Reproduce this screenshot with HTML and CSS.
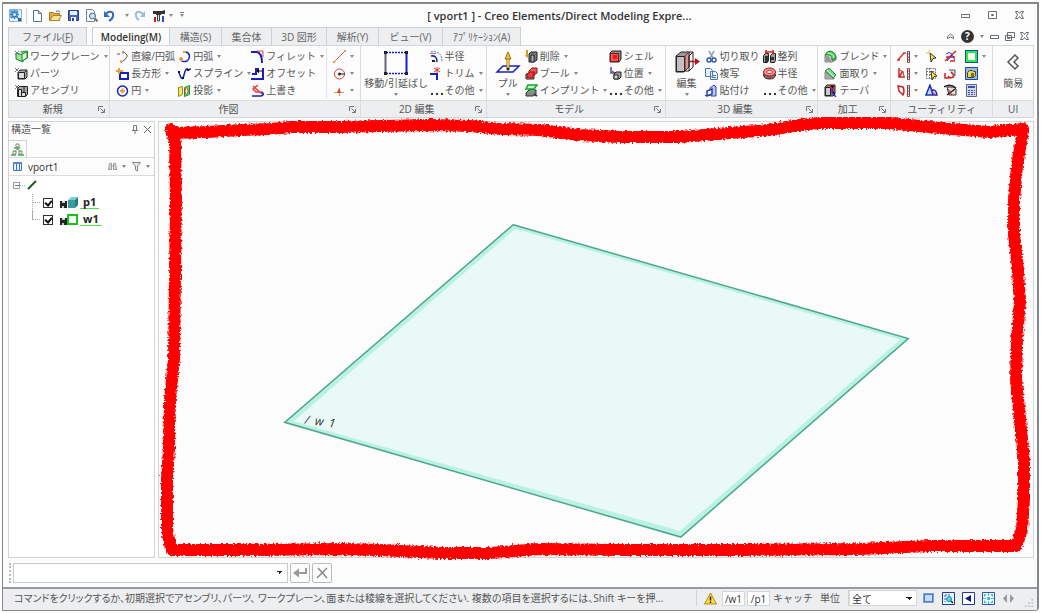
FILE: index.html
```html
<!DOCTYPE html>
<html lang="ja">
<head>
<meta charset="utf-8">
<title>[ vport1 ] - Creo Elements/Direct Modeling Express</title>
<link rel="stylesheet" href="styles.css">
</head>
<body>
<div class="window">
  <header class="titlebar">
    <div class="quick">
      <svg class="ic" viewBox="0 0 13 13"><path fill="#e6f3fb" stroke="#8db4d0" d="M.5.5h12v12H.5z"/><path fill="#8dc4e8" d="M1 1h8v8H1z"/><path stroke="#2f80bd" stroke-width="1.500" d="M5.500 1v9M1 5.500h9M2 2l7 7M9 2L2 9"/><circle cx="5.500" cy="5.500" r="1.500" fill="#d8f0ff"/><path fill="#276594" d="M9 9h3v3H9z"/></svg>
      <i class="vsep"></i>
      <button class="q" aria-label="新規"><svg class="ic" viewBox="0 0 13 13"><path fill="#fff" stroke="#5a7392" d="M2.500 1.500h5l3 3v8h-8z"/><path fill="#c9d9ea" stroke="#5a7392" d="M7.500 1.500v3h3"/></svg></button>
      <button class="q" aria-label="開く"><svg class="ic" viewBox="0 0 13 13"><path fill="#e8a93b" stroke="#a87320" d="M.5 11.500v-8h4l1 1h5v7z"/><path fill="#ffe49a" stroke="#b88328" d="M1 11.500l3-5h8.500l-3 5z"/><path fill="none" stroke="#3a70ad" d="M7 2.500q3-2 4 1"/></svg></button>
      <button class="q" aria-label="保存"><svg class="ic" viewBox="0 0 13 13"><path fill="#4666bd" stroke="#263f8e" d="M1.500 1.500h10v10h-10z"/><path fill="#e8f0ff" d="M3 2h7v4H3z"/><path fill="#fff" d="M4 8h5v4H4z"/><path fill="#263f8e" d="M5 9h2v3H5z"/></svg></button>
      <button class="q" aria-label="プレビュー"><svg class="ic" viewBox="0 0 13 13"><path fill="#fff" stroke="#71839a" d="M1.500.5h6l2 2v10h-8z"/><circle cx="7.500" cy="7" r="3" fill="#c8e2f8" stroke="#48688c"/><path stroke="#8b6b46" stroke-width="2" d="M10 9.500l2.500 3"/></svg></button>
      <button class="q" aria-label="元に戻す"><svg class="ic" viewBox="0 0 13 13"><path fill="none" stroke="#3769bd" stroke-width="2" d="M3 4.500C7 1 11 3 10 7q-.5 3-4 5"/><path fill="#3769bd" d="M1 2v6h6z"/></svg></button>
      <i class="caret"></i>
      <button class="q" aria-label="やり直し"><svg class="ic" viewBox="0 0 13 13"><path fill="none" stroke="#9bbcdd" stroke-width="2" d="M10 5C6 1 2 3 3 7q.5 3 3 4"/><path fill="#9bbcdd" d="M12 2v6H7z"/></svg></button>
      <button class="q wide" aria-label="ツール"><svg class="ic" viewBox="0 0 13 13"><path fill="#333" d="M0 2h9l3-1v4H8v1H3V5H0z"/><path fill="#ddd" stroke="#444" d="M4.500 6v6h2V6"/><path stroke="#c42020" stroke-width="2" d="M2 8v5"/><path stroke="#2954b6" stroke-width="2" d="M10 7v6"/></svg><i class="caret"></i></button>
      <i class="caret bar"></i>
    </div>
    <h1>[ vport1 ] - Creo Elements/Direct Modeling Expre...</h1>
    <div class="winbtns">
      <button aria-label="最小化"><svg class="ic" viewBox="0 0 13 13"><path fill="#fff" stroke="#666c75" d="M2.500 5.500h8v3h-8z"/></svg></button>
      <button aria-label="最大化"><svg class="ic" viewBox="0 0 13 13"><path fill="#fff" stroke="#666c75" d="M2.500 2.500h8v7h-8zM5.500 5.500h2v1h-2z"/></svg></button>
      <button aria-label="閉じる"><svg class="ic" viewBox="0 0 13 13"><path fill="#fff" stroke="#666c75" d="M2.500 2.500h2.500l1.500 2 1.500-2h2.500L8.500 6l2 3.500H8l-1.500-2-1.500 2H2.500l2-3.500z"/></svg></button>
    </div>
  </header>

  <nav class="tabs">
    <button class="tab file">ファイル(<u>F</u>)</button>
    <button class="tab active">Modeling(M)</button>
    <button class="tab t52">構造(S)</button>
    <button class="tab t50">集合体</button>
    <button class="tab t55">3D 図形</button>
    <button class="tab t52">解析(Y)</button>
    <button class="tab t64">ビュー(V)</button>
    <button class="tab t78">ｱﾌﾟﾘｹｰｼｮﾝ(A)</button>
    <div class="docbtns">
      <button aria-label="リボンを隠す"><svg class="ic" viewBox="0 0 13 13"><path fill="#fff" stroke="#666c75" d="M3.500 6.500L6.500 4l3 2.500v2L6.500 7l-3 1.500z"/></svg></button>
      <button aria-label="ヘルプ" class="help">?</button>
      <i class="caret"></i>
      <button aria-label="最小化"><svg class="ic" viewBox="0 0 13 13"><path fill="#fff" stroke="#666c75" d="M2.500 5.500h8v3h-8z"/></svg></button>
      <button aria-label="元のサイズ"><svg class="ic" viewBox="0 0 13 13"><path fill="#fff" stroke="#666c75" d="M4.500 2.500h7v5h-7zM2.500 5.500h6v5h-6zM4.500 7.500h2v1h-2z"/></svg></button>
      <button aria-label="閉じる"><svg class="ic" viewBox="0 0 13 13"><path fill="#fff" stroke="#666c75" d="M2.500 2.500h2.500l1.500 2 1.500-2h2.500L8.500 6l2 3.500H8l-1.500-2-1.500 2H2.500l2-3.500z"/></svg></button>
    </div>
  </nav>

  <section class="ribbon">
    <div class="group g-new">
      <div class="tools">
        <button class="tool"><svg class="ic" viewBox="0 0 13 13"><path fill="#9be49b" stroke="#168a2b" d="M1 3l7 2v7L1 9zM5.500 2l7-1v7l-4 2"/><path fill="#dfffd8" stroke="#168a2b" d="M7 4l5-2v6L7 11z"/><path stroke="#777" d="M0 1l4 4M4 1L0 5"/></svg>ワークプレーン<i class="caret"></i></button>
        <button class="tool"><svg class="ic" viewBox="0 0 13 13"><path fill="#aaa" stroke="#222" d="M3 5l2-2h7v7l-2 2H3z"/><path fill="#ddd" stroke="#222" d="M3.500 5.500h6v6h-6zM9.500 5.500l2-2"/><path stroke="#777" d="M0 1l4 4M4 1L0 5"/></svg>パーツ</button>
        <button class="tool"><svg class="ic" viewBox="0 0 13 13"><path fill="#aaa" stroke="#222" d="M2.500 4.500l2-2h8v8l-2 2h-8z"/><path fill="#ddd" stroke="#222" d="M3.500 5.500h3v7h-3zM6.500 8.500h4v4h-4zM9 3v5"/><path stroke="#777" d="M0 1l4 4M4 1L0 5"/></svg>アセンブリ</button>
      </div>
      <h2 class="has-launch">新規<svg class="launch" viewBox="0 0 7 7"><path fill="none" stroke="#777" d="M.5 5V.5H5M2.500 2.500L6 6M6.500 3v3.500H3"/></svg></h2>
    </div>

    <div class="group g-draw">
      <div class="tools">
        <button class="tool"><svg class="ic" viewBox="0 0 13 13"><path fill="none" stroke="#3150c8" d="M1 4h3M4 12q6-1 7-7L7 1"/><path stroke="#e3a13a" stroke-width="2" d="M6 2l2 1M4 11l2 1M10 6h2"/></svg>直線/円弧</button>
        <button class="tool"><svg class="ic" viewBox="0 0 13 13"><path fill="none" stroke="#1820bd" stroke-width="2" d="M4 6h8v6H4z"/><path stroke="#e3a13a" stroke-width="2" d="M0 4h7M3 1v6"/></svg>長方形<i class="caret"></i></button>
        <button class="tool"><svg class="ic" viewBox="0 0 13 13"><circle cx="6.500" cy="7" r="5" fill="none" stroke="#1820bd" stroke-width="1.500"/><path stroke="#e3a13a" stroke-width="2" d="M4 7h5M6.500 4.500v5"/></svg>円<i class="caret"></i></button>
        <button class="tool"><svg class="ic" viewBox="0 0 13 13"><path fill="none" stroke="#1820bd" stroke-width="1.500" d="M6 2c6-1 7 6 3 9-3 1-5 1-6-1"/><path stroke="#e3a13a" stroke-width="2" d="M5 2h3M1 9h4M3 7v4"/></svg>円弧<i class="caret"></i></button>
        <button class="tool"><svg class="ic" viewBox="0 0 13 13"><path fill="none" stroke="#1820bd" stroke-width="1.500" d="M1 5c2 8 4 8 5 3s3-8 4-5l3-1"/><path stroke="#111" stroke-width="2" d="M0 5h2M4 11h2M9 3h2"/></svg>スプライン<i class="caret"></i></button>
        <button class="tool"><svg class="ic" viewBox="0 0 13 13"><path fill="#ffe65a" stroke="#8b8c25" d="M.5 3.500l4-1v8l-4 2z"/><path fill="#69df69" stroke="#159532" d="M6.500 3.500l5-2v9l-5 2z"/><ellipse cx="8.500" cy="7" rx="1.500" ry="3" fill="#fff" stroke="#d6322c"/></svg>投影<i class="caret"></i></button>
        <button class="tool"><svg class="ic" viewBox="0 0 13 13"><path fill="none" stroke="#1820bd" stroke-width="2" d="M0 2h6q5 1 5 11"/><path fill="none" stroke="#e24040" d="M6 1h6v6"/></svg>フィレット<i class="caret"></i></button>
        <button class="tool"><svg class="ic" viewBox="0 0 13 13"><path fill="none" stroke="#1820bd" stroke-width="2" d="M0 12h12V1M1 7h4V2h3"/><path stroke="#111" d="M6 4h6M8 2L6 4l2 2"/></svg>オフセット</button>
        <button class="tool"><svg class="ic" viewBox="0 0 13 13"><path fill="none" stroke="#e24040" stroke-width="1.500" d="M7 1L2 5l3 3h6M2 2l9 8"/><path fill="none" stroke="#1820bd" stroke-width="1.500" d="M1 12h9q4-1 1-4"/></svg>上書き</button>
        <button class="tool sep" aria-label="線"><svg class="ic" viewBox="0 0 13 13"><path stroke="#cf5f59" d="M1 12L12 1"/><path stroke="#e0a149" stroke-width="2" d="M0 12h2M11 1h2"/></svg><i class="caret"></i></button>
        <button class="tool sep" aria-label="補助円"><svg class="ic" viewBox="0 0 13 13"><circle cx="6.500" cy="7" r="5" fill="none" stroke="#cf3f3f"/><circle cx="6.500" cy="7" r="1.500" fill="#222"/><path stroke="#222" d="M6 7h6"/></svg><i class="caret"></i></button>
        <button class="tool sep" aria-label="点"><svg class="ic" viewBox="0 0 13 13"><path stroke="#e0a149" d="M1 8.500h10M6.500 4v8"/><path fill="#cf3f3f" d="M4 9l2-5 2 5z"/></svg><i class="caret"></i></button>
      </div>
      <h2 class="has-launch">作図<svg class="launch" viewBox="0 0 7 7"><path fill="none" stroke="#777" d="M.5 5V.5H5M2.500 2.500L6 6M6.500 3v3.500H3"/></svg></h2>
    </div>

    <div class="group g-2d">
      <div class="tools">
        <button class="big"><svg class="bi" viewBox="0 0 26 26"><path stroke="#667" stroke-width="2" d="M2.500 2v22"/><path stroke="#1820bd" stroke-width="2" d="M23.500 2v22"/><path stroke="#1820bd" stroke-width="1.500" stroke-dasharray="2 1" d="M3 2.500h20M3 23.500h20"/><path fill="#222" d="M1 1h3v3H1zM1 22h3v3H1zM22 1h3v3h-3zM22 22h3v3h-3z"/></svg>移動/引延ばし<i class="caret"></i></button>
        <button class="tool"><svg class="ic" viewBox="0 0 13 13"><path fill="none" stroke="#4c6fd0" stroke-dasharray="2 1" d="M1 2q11-2 11 10"/><path fill="none" stroke="#1820bd" stroke-width="1.500" d="M1 6q6-1 6 6"/><path stroke="#d66" d="M0 3.500h6"/><path fill="#222" d="M2 10h3v2H2z"/></svg>半径</button>
        <button class="tool"><svg class="ic" viewBox="0 0 13 13"><path fill="none" stroke="#1820bd" stroke-width="2" d="M0 7h7v6"/><path stroke="#e23030" d="M7 0v6M4 1l6 4M10 1L4 5"/></svg>トリム<i class="caret"></i></button>
        <button class="tool"><svg class="ic" viewBox="0 0 13 13"><path fill="#333" d="M1 9h2v2H1zM6 9h2v2H6zM11 9h2v2h-2z"/></svg>その他<i class="caret"></i></button>
      </div>
      <h2 class="has-launch">2D 編集<svg class="launch" viewBox="0 0 7 7"><path fill="none" stroke="#777" d="M.5 5V.5H5M2.500 2.500L6 6M6.500 3v3.500H3"/></svg></h2>
    </div>

    <div class="group g-model">
      <div class="tools">
        <button class="big"><svg class="bi" viewBox="0 0 26 26"><path fill="#fff" stroke="#1820bd" stroke-width="1.500" d="M2 22l6-6h16l-6 6z"/><path stroke="#7c6325" stroke-width="3" d="M13 19V7"/><path stroke="#f3c032" stroke-width="2" d="M13 19V7"/><path fill="#f3c032" stroke="#9c7417" d="M10 9l3-7 3 7z"/><circle cx="13" cy="19" r="1.500" fill="#222"/></svg>プル<i class="caret"></i></button>
        <button class="tool"><svg class="ic" viewBox="0 0 13 13"><path fill="#777" stroke="#222" d="M4 4l2-2h6v8l-3 2H4z"/><path fill="#a8b7d9" stroke="#222" d="M6 5h3v7H6z"/><path stroke="#d69c21" stroke-width="2" d="M2 0v6"/><path fill="#d69c21" d="M0 5h4L2 8z"/></svg>削除<i class="caret"></i></button>
        <button class="tool"><svg class="ic" viewBox="0 0 13 13"><path fill="#f25b5b" stroke="#851515" d="M4 4l3-3h5v5L9 8H4z"/><path fill="#ddd" stroke="#222" d="M1 7h8v5H1z"/><path fill="#f33" stroke="#851515" d="M2 7l3-2h5L8 8v3H2z"/></svg>ブール<i class="caret"></i></button>
        <button class="tool"><svg class="ic" viewBox="0 0 13 13"><path fill="#c4f4c4" stroke="#13a52e" stroke-width="1.500" d="M3 1h9l-3 4H1zM3 7h5"/><path fill="#888" stroke="#333" d="M1 9l3-3h7v4l-3 2H1z"/><path fill="#48c260" d="M3 8l3-2h4L7 8z"/><path stroke="#333" stroke-width="2" d="M9 10l3 2"/></svg>インプリント<i class="caret"></i></button>
        <button class="tool"><svg class="ic" viewBox="0 0 13 13"><path fill="#888" stroke="#222" d="M1 3l2-2h9v8l-2 3H1z"/><path fill="#e65a5a" stroke="#801616" d="M1.500 3.500h8v8h-8z"/><path fill="#f2140b" d="M4 5h4v4H4z"/></svg>シェル</button>
        <button class="tool"><svg class="ic" viewBox="0 0 13 13"><path fill="none" stroke="#3253d5" stroke-width="1.500" d="M2 0v6h5"/><path stroke="#e22" stroke-width="1.500" d="M3 4l5 4"/><path fill="#999" stroke="#222" d="M5 7l2-2h5v5l-2 2H5z"/><path fill="#ddd" stroke="#222" d="M5 8h4v4H5z"/></svg>位置<i class="caret"></i></button>
        <button class="tool"><svg class="ic" viewBox="0 0 13 13"><path fill="#333" d="M1 9h2v2H1zM6 9h2v2H6zM11 9h2v2h-2z"/></svg>その他<i class="caret"></i></button>
      </div>
      <h2 class="has-launch">モデル<svg class="launch" viewBox="0 0 7 7"><path fill="none" stroke="#777" d="M.5 5V.5H5M2.500 2.500L6 6M6.500 3v3.500H3"/></svg></h2>
    </div>

    <div class="group g-3d">
      <div class="tools">
        <button class="big"><svg class="bi" viewBox="0 0 26 26"><path fill="#999" stroke="#222" d="M2 6l5-4h8v15l-5 5H2z"/><path fill="#c4c0c0" stroke="#222" d="M2.500 6.500h8v15h-8z"/><path fill="#c99" stroke="#722" d="M11 6l4-4v15l-4 4z"/><path fill="none" stroke="#222" d="M15 2h4v15l-4 4h-4M15 6l4-4M15 6v15"/><path stroke="#b11" stroke-width="1.500" d="M16 11.500h6"/><path fill="#b11" d="M21 8l5 3.500-5 3.500z"/></svg>編集<i class="caret"></i></button>
        <button class="tool"><svg class="ic" viewBox="0 0 13 13"><path stroke="#8796aa" stroke-width="1.500" d="M4 1l4 7M9 1L5 8"/><g fill="none" stroke="#2c5bae" stroke-width="1.500"><circle cx="4" cy="10" r="2"/><circle cx="9" cy="10" r="2"/></g></svg>切り取り</button>
        <button class="tool"><svg class="ic" viewBox="0 0 13 13"><path fill="#e8f2fd" stroke="#4d78ad" d="M.5 1.500h5l2 2v6h-7zM5.500 4.500h5l2 2v6h-7z"/><path stroke="#4d78ad" d="M7 8.500h4M7 10.500h4"/></svg>複写</button>
        <button class="tool"><svg class="ic" viewBox="0 0 13 13"><path fill="#b6c9f4" stroke="#2c3fae" d="M5 4l4-3 2 2v9H6z"/><path fill="#fff" stroke="#2c3fae" stroke-width="1.500" d="M2 7l5-2v5l-5 2z"/><path stroke="#2c3fae" d="M0 11.500h5"/></svg>貼付け</button>
        <button class="tool"><svg class="ic" viewBox="0 0 13 13"><path fill="#999" stroke="#222" d="M.5 5.500l2-2h3v7l-1 2h-4zM7.500 5.500l2-2h3v7l-1 2h-4z"/><path fill="#333" d="M2 6h3v6H2zM8 7h3v3H8z"/><path stroke="#d22" stroke-width="1.500" d="M2 2h9M3 0v4M10 0v4"/></svg>整列</button>
        <button class="tool"><svg class="ic" viewBox="0 0 13 13"><ellipse cx="6.500" cy="8" rx="6" ry="4" fill="#777" stroke="#222"/><ellipse cx="6.500" cy="5" rx="6" ry="4" fill="#ef9999" stroke="#a11"/><ellipse cx="6.500" cy="5" rx="3" ry="1.500" fill="#fff" stroke="#d22"/><path stroke="#d22" d="M2 8l8 4"/></svg>半径</button>
        <button class="tool"><svg class="ic" viewBox="0 0 13 13"><path fill="#333" d="M1 9h2v2H1zM6 9h2v2H6zM11 9h2v2h-2z"/></svg>その他<i class="caret"></i></button>
      </div>
      <h2 class="has-launch">3D 編集<svg class="launch" viewBox="0 0 7 7"><path fill="none" stroke="#777" d="M.5 5V.5H5M2.500 2.500L6 6M6.500 3v3.500H3"/></svg></h2>
    </div>

    <div class="group g-mach">
      <div class="tools">
        <button class="tool"><svg class="ic" viewBox="0 0 13 13"><path fill="#999" stroke="#888" d="M1 5v7h7V8l4-1v3l-4 2"/><path fill="#55cf67" stroke="#16822c" d="M1 5q2-4 5-4 6 1 6 7l-4 2q0-5-4-5z"/><path fill="none" stroke="#c7ffd0" d="M4 3q5 0 6 5"/><path fill="#999" d="M1 6h3q3 0 3 6H1z"/></svg>ブレンド<i class="caret"></i></button>
        <button class="tool"><svg class="ic" viewBox="0 0 13 13"><path fill="#aaa" stroke="#888" d="M1 5v7h9V9z"/><path fill="#7bd48b" stroke="#21843a" d="M1 4l4-3 7 7-3 3z"/><path stroke="#dcffe3" d="M3 3l7 7"/></svg>面取り<i class="caret"></i></button>
        <button class="tool"><svg class="ic" viewBox="0 0 13 13"><path fill="#888" stroke="#222" d="M1 3l2-2h8v9l-2 2H1z"/><path fill="#ccc" stroke="#222" d="M1.500 3.500h5v8h-5z"/><path stroke="#e22" stroke-width="1.500" d="M6 1l2 5 3-4"/><path stroke="#53c" stroke-width="1.500" d="M8 4v5l4 4"/></svg>テーパ</button>
      </div>
      <h2 class="has-launch">加工<svg class="launch" viewBox="0 0 7 7"><path fill="none" stroke="#777" d="M.5 5V.5H5M2.500 2.500L6 6M6.500 3v3.500H3"/></svg></h2>
    </div>

    <div class="group g-util">
      <div class="tools">
        <button class="tool" aria-label="長さ測定"><svg class="ic" viewBox="0 0 13 13"><path stroke="#d33" stroke-width="1.500" d="M1 10l6-7M0 10h3M6 3h3"/><path fill="none" stroke="#844" d="M10.500 1.500h2v11h-2zM10 4h2M10 7h2M10 10h2"/></svg><i class="caret"></i></button>
        <button class="tool" aria-label="角度測定"><svg class="ic" viewBox="0 0 13 13"><path fill="none" stroke="#c22" stroke-width="1.500" d="M2 1v9h6M2 10l4-6"/><path fill="none" stroke="#c22" d="M3 3q4 1 4 6"/><path fill="none" stroke="#844" d="M10.500 1.500h2v11h-2zM10 4h2M10 7h2M10 10h2"/></svg><i class="caret"></i></button>
        <button class="tool" aria-label="面積測定"><svg class="ic" viewBox="0 0 13 13"><path fill="none" stroke="#c22" stroke-width="1.500" d="M1 2l5 1q2 4 0 8L2 7z"/><path fill="none" stroke="#844" d="M10.500 1.500h2v11h-2zM10 4h2M10 7h2M10 10h2"/></svg><i class="caret"></i></button>
        <button class="tool" aria-label="選択"><svg class="ic" viewBox="0 0 13 13"><path fill="#ffe82e" stroke="#333" d="M5 3l6 5-3 .5L6 12z"/><path stroke="#e9c72d" d="M1 3h3M4 0v3"/></svg></button>
        <button class="tool" aria-label="選択リスト"><svg class="ic" viewBox="0 0 13 13"><path fill="#fff" stroke="#777" stroke-dasharray="2 1" d="M1.500 1.500h9v10h-9zM1 4.500h9M1 7.500h9M4.500 1v10"/><path fill="#ffe82e" stroke="#333" d="M6 4l6 5-3 .5L7 13z"/></svg></button>
        <button class="tool" aria-label="形状検査"><svg class="ic" viewBox="0 0 13 13"><path fill="#cbd9ff" stroke="#1c30b5" stroke-width="1.500" d="M1 11L5 1l3 10zM6 7q5-3 6 4H1"/><path stroke="#d33" d="M7 7l4 5"/></svg></button>
        <button class="tool" aria-label="変更"><svg class="ic" viewBox="0 0 13 13"><path stroke="#d22" stroke-width="1.500" d="M1 11L12 1M2 7h9M6 11h5"/><path fill="none" stroke="#2638c9" d="M2 4q3-3 6 0M3 11l5-6 3 5"/></svg></button>
        <button class="tool" aria-label="部品回転"><svg class="ic" viewBox="0 0 13 13"><path fill="#ddd" stroke="#555" d="M5 3h6v6H8"/><path fill="none" stroke="#c22" stroke-width="1.500" d="M1 6v5h4M4 9l2 2 4-1M7 5l3 3"/></svg></button>
        <button class="tool" aria-label="更新"><svg class="ic" viewBox="0 0 13 13"><path fill="#ddd" stroke="#333" d="M3 3h7l2 2v6H5z"/><path fill="none" stroke="#222" stroke-width="1.500" d="M0 3q6-4 12 1M3 11l8-6"/><path stroke="#c22" d="M4 5l4 6"/></svg></button>
        <button class="tool" aria-label="作業面表示"><svg class="ic" viewBox="0 0 13 13"><path fill="#1b46a5" d="M0 0h13v13H0z"/><path fill="#fff" stroke="#22f03a" stroke-width="2" d="M2 2h9v9H2z"/></svg><i class="caret"></i></button>
        <button class="tool" aria-label="パーツ表示"><svg class="ic" viewBox="0 0 13 13"><path fill="#9db8e6" stroke="#1b46a5" d="M.5.5h12v12H.5z"/><path fill="#e4d944" stroke="#443" d="M2.500 5.500l2-2h3l1 1h2v4l-2 2h-6z"/><path fill="#77711c" d="M6 6h3v4H6z"/></svg></button>
        <button class="tool" aria-label="電卓"><svg class="ic" viewBox="0 0 13 13"><path fill="#d3d9e7" stroke="#5d6685" d="M1.500.5h10v12h-10z"/><path fill="#3550b0" d="M3 2h7v2H3zM3 6h2v1H3zM6 6h2v1H6zM9 6h1v1H9zM3 8h2v1H3zM6 8h2v1H6zM9 8h1v1H9zM3 10h2v1H3zM6 10h2v1H6zM9 10h1v1H9z"/></svg></button>
      </div>
      <h2>ユーティリティ</h2>
    </div>

    <div class="group g-ui">
      <div class="tools">
        <button class="big"><svg class="bi" viewBox="0 0 26 26"><path fill="#fff" stroke="#555" stroke-width="1.500" d="M15 5l-7 7 7 7 3-3-4-4 4-4z"/></svg>簡易<i class="spacer"></i></button>
      </div>
      <h2>UI</h2>
    </div>
  </section>

  <main class="work">
    <aside class="panel">
      <div class="panel-head"><span>構造一覧</span>
        <button aria-label="固定"><svg class="ic" viewBox="0 0 13 13"><path fill="none" stroke="#777" d="M5.500 7V2.500h3V7M4 7.500h6M7 8v3"/></svg></button>
        <button aria-label="閉じる"><svg class="ic" viewBox="0 0 13 13"><path stroke="#666" d="M3 3l7 7M10 3l-7 7"/></svg></button>
      </div>
      <div class="panel-tabs"><button aria-label="構造"><svg class="ic" viewBox="0 0 13 13"><path fill="none" stroke="#888" d="M5 1h3v3H5zM6.500 4v3M3 9l3.500-3L10 9M2 8h3v3H2zM8 8h3v3H8z"/><path stroke="#30b53a" stroke-width="1.500" d="M3 5h6M0 12h5M7 12h6"/></svg></button></div>
      <div class="panel-bar">
        <svg class="ic" viewBox="0 0 13 13"><path fill="#eaf2fc" stroke="#3e78bf" d="M2.500 2.500h8v8h-8z"/><path fill="#4c8cd4" d="M2 2h9v2H2z"/><path stroke="#3e78bf" d="M5.500 4v6M8.500 4v6"/></svg>
        <span>vport1</span>
        <button aria-label="検索"><svg class="ic" viewBox="0 0 13 13"><path fill="#ddd" stroke="#999" d="M3.500 3.500h2v6h-3zM7.500 3.500h2l1 6h-3zM5.500 6h2"/></svg><i class="caret"></i></button>
        <button aria-label="フィルタ"><svg class="ic" viewBox="0 0 13 13"><path fill="#e3f2e3" stroke="#888" d="M2.500 2.500h8L7.500 6v5l-2-1V6z"/></svg><i class="caret"></i></button>
      </div>
      <ul class="tree">
        <li class="root"><svg viewBox="0 0 28 13"><path fill="#fff" stroke="#999" d="M1.500 3.500h6v6h-6z"/><path stroke="#777" d="M3 6.500h4"/><path stroke="#aaa" stroke-dasharray="1 1" d="M8 6.500h5"/><path stroke="#1a5c20" stroke-width="2" d="M16 10l8-8"/></svg></li>
        <li><label><input type="checkbox" checked><svg class="obj" viewBox="0 0 20 13"><path fill="#222" d="M1 5h7v7H1z"/><path fill="#ccd" d="M3 5h3v2H3zM3 10h2v2H3z"/><path fill="#3b9c9d" d="M9 4h7v8H9z"/><path fill="#78cfcf" d="M9 4l3-3h7l-3 3z"/><path fill="#247c80" d="M16 4l3-3v8l-3 3z"/></svg><b>p1</b></label></li>
        <li><label><input type="checkbox" checked><svg class="obj" viewBox="0 0 20 13"><path fill="#222" d="M1 5h7v7H1z"/><path fill="#ccd" d="M3 5h3v2H3zM3 10h2v2H3z"/><path fill="#fff" stroke="#19c419" stroke-width="2" d="M9 2h9v9H9z"/></svg><b>w1</b></label></li>
      </ul>
    </aside>
    <section class="viewport">
      <svg viewBox="159 122 874 436">
        <defs><filter id="rough" x="-5%" y="-5%" width="110%" height="110%"><feTurbulence type="fractalNoise" baseFrequency=".5" numOctaves="2" seed="4"/><feDisplacementMap in="SourceGraphic" scale="5" xChannelSelector="R" yChannelSelector="G"/></filter></defs>
        <path fill="#b9f2e2" d="M513 225l396 114-228 199-397-115z"/>
        <path fill="#e9f9f6" d="M515 229l386 111-221 192-387-110z"/>
        <path fill="none" stroke="#4ea78c" stroke-width="1.500" d="M513 225l396 114-228 199-397-115z"/>
        <text class="wp-name" transform="rotate(8 303 423)" x="304 314 328" y="424">/w1</text>
        <g filter="url(#rough)" fill="none" stroke="#f00" stroke-width="12" stroke-linejoin="round" stroke-linecap="round">
          <path d="M171 133L205 132 240 130 270 129 290 127 340 127 380 126 430 125 470 126 500 129 540 130 580 135 620 137 680 137 730 133 770 130 800 125 820 123 890 123 940 128 990 132 1024 129"/>
          <path d="M1024 131L1018 165 1015 200 1015 235 1018 260 1021 300 1018 340 1017 380 1021 420 1025 460 1025 500 1023 530 1018 545"/>
          <path d="M1017 547L930 547 860 550 740 551 620 551 540 550 490 554 440 554 380 551 340 550 240 551 172 551"/>
          <path d="M170 129L174 142 175 200 174 280 173 360 169 400 168 450 166 480 166 530 170 550"/>
        </g>
      </svg>
    </section>
  </main>

  <form class="command">
    <i class="grip"></i>
    <select aria-label="コマンド"><option></option></select>
    <button type="button" aria-label="実行"><svg viewBox="0 0 18 18"><path fill="none" stroke="#999" stroke-width="2" d="M15 4v5H5"/><path fill="#999" d="M8 4.500v9L2 9z"/></svg></button>
    <button type="button" aria-label="取消"><svg viewBox="0 0 18 18"><path stroke="#888" stroke-width="1.500" d="M5 4l9 10M14 4L4 14"/></svg></button>
  </form>

  <footer class="status">
    <p>コマンドをクリックするか、初期選択でアセンブリ、パーツ、 ワークプレーン、面または稜線を選択してください. 複数の項目を選択するには、Shift キーを押...</p>
    <i class="vsep"></i>
    <svg class="ic warn" viewBox="0 0 13 13"><path fill="#ffd83d" stroke="#b28c12" d="M6.500 1l6 11H.5z"/><path stroke="#222" stroke-width="1.500" d="M6.500 4.500v4M6.500 9.500V11"/></svg>
    <span class="cell">/w1</span><span class="cell">/p1</span>
    <button class="txt">キャッチ</button><button class="txt">単位</button>
    <i class="vsep"></i>
    <select aria-label="選択フィルタ"><option>全て</option></select>
    <div class="sicons">
      <button aria-label="範囲"><svg class="ic" viewBox="0 0 13 13"><path fill="#4b7cc6" stroke="#7da0d2" d="M1.500 1.500h10v9h-10z"/><path fill="#c4dcf6" d="M3 3h7v6H3z"/></svg></button>
      <button aria-label="拡大"><svg class="ic" viewBox="0 0 13 13"><path fill="#eaf8ff" stroke="#2238a7" d="M.5.5h12v12H.5z"/><path fill="none" stroke="#3555bd" stroke-dasharray="2 1" d="M3 3h6M3 3v7"/><circle cx="7" cy="7" r="2.500" fill="#48d8ee" stroke="#258da9"/><path stroke="#222" stroke-width="1.500" d="M9 9l2 2"/></svg></button>
      <button aria-label="前の表示"><svg class="ic" viewBox="0 0 13 13"><path fill="#fff" stroke="#2238a7" d="M.5.5h12v12H.5z"/><path fill="#111783" d="M9 3v7L3 6.500z"/></svg></button>
      <button aria-label="全体表示"><svg class="ic" viewBox="0 0 13 13"><path fill="#fff" stroke="#3151ad" d="M.5.5h12v12H.5z"/><path fill="#2fc7df" d="M5 5h3v3H5zM2 2h3L2 5zM8 2h3v3zM2 8v3h3zM11 8v3H8zM6 1h1v3H6zM6 9h1v3H6zM1 6h3v1H1zM9 6h3v1H9z"/></svg></button>
      <button aria-label="移動"><svg class="ic" viewBox="0 0 13 13"><path fill="#999" d="M5 2v9L1 6.500zM8 2v9l4-4.500z"/></svg></button>
    </div>
    <svg class="resize" viewBox="0 0 10 10"><path fill="#b9bec4" d="M8 0h2v2H8zM4 4h2v2H4zM8 4h2v2H8zM0 8h2v2H0zM4 8h2v2H4zM8 8h2v2H8z"/></svg>
  </footer>
</div>
</body>
</html>
```
FILE: styles.css
```css
* { box-sizing: border-box; }
body {
  margin: 0;
  padding: 2px;
  height: 100vh;
  background: #fff;
  color: #555;
  font: 10px/16px "Open Sans", "Noto Sans CJK JP", sans-serif;
}
button {
  display: flex;
  align-items: center;
  margin: 0;
  padding: 0;
  border: 0;
  background: none;
  color: inherit;
  font: inherit;
  white-space: nowrap;
}
svg { display: block; flex: none; }
h1, h2, p, ul { margin: 0; padding: 0; font: inherit; }
select { appearance: none; border-radius: 0; font: inherit; color: #333; }
.ic { width: 13px; height: 13px; }
.caret {
  flex: none;
  margin-left: 4px;
  border: 2px solid transparent;
  border-top: 3px solid #888;
  border-bottom: 0;
}
.vsep { flex: none; width: 1px; height: 16px; background: #d0d4d8; }

.window {
  display: flex;
  flex-direction: column;
  height: 100%;
  border: 1px solid #85888b;
  border-top-width: 2px;
  border-right-width: 2px;
  border-radius: 0 0 4px 0;
  background: #fcfcfc;
}

.titlebar {
  display: grid;
  grid-template-columns: 5fr auto 4fr;
  align-items: center;
  height: 23px;
  padding: 0 11px 0 6px;
}
.titlebar h1 { font-weight: 600; font-size: 11px; color: #333; white-space: nowrap; }
.quick { display: flex; align-items: center; gap: 4px; }
.q.wide { margin-left: 2px; }
.q.wide .caret { margin-left: 3px; }
.caret.bar { position: relative; margin-left: 2px; }
.caret.bar::before { content: ""; position: absolute; left: -2px; top: -5px; width: 4px; height: 1px; background: #777; }
.quick > .q { margin-right: 1px; }
.winbtns { display: flex; justify-content: flex-end; gap: 14px; }

.tabs { display: flex; align-items: stretch; height: 18px; padding-left: 5px; }
.tab {
  justify-content: center;
  border: 1px solid #ccd1d5;
  border-width: 1px 1px 0 0;
  background: #eceef0;
  color: #666;
}
.tab.file { width: 79px; margin-right: 5px; border-left-width: 1px; }
.tab.active { width: 78px; border-left-width: 1px; background: #fcfcfc; font-weight: 600; color: #333; }
.t50 { width: 50px; }
.t52 { width: 52px; }
.t55 { width: 55px; }
.t64 { width: 64px; }
.t78 { width: 78px; }
.docbtns { display: flex; align-items: center; gap: 2px; margin-left: auto; padding-right: 6px; }
.docbtns .caret { margin: 0 2px; }
.help { justify-content: center; width: 13px; height: 13px; margin: 0 2px; border-radius: 50%; background: #333; color: #fff; font-weight: 700; }

.ribbon { display: flex; height: 73px; margin: 0 3px 0 5px; border: 1px solid #d3d7da; }
.group { display: flex; flex-direction: column; border-right: 1px solid #d9dcdf; min-width: 0; }
.group:last-child { border-right: 0; }
.g-new { flex: 101 1 0; }
.g-draw { flex: 251 1 0; }
.g-2d { flex: 126 1 0; }
.g-model { flex: 179 1 0; }
.g-3d { flex: 153 1 0; }
.g-mach { flex: 72 1 0; }
.g-util { flex: 102 1 0; }
.g-ui { flex: 40 1 0; }
.group h2 {
  position: relative;
  height: 17px;
  border-top: 1px solid #d9dcdf;
  background: #eceef0;
  text-align: center;
}
.group .has-launch { padding-right: 13px; }
.launch { position: absolute; right: 4px; top: 5px; width: 7px; height: 7px; }
.tools {
  display: grid;
  flex: 1;
  grid-template-rows: repeat(3, 17px);
  grid-auto-flow: column;
  align-content: center;
  justify-content: start;
  padding-left: 6px;
}
.tool { gap: 2px; }
.tool .caret { margin-left: 2px; }
.g-draw .tools { grid-template-columns: 62px 73px 75px 34px; }
.g-draw .sep { padding-left: 6px; border-left: 1px solid #e2e4e6; }
.g-2d .tools { grid-template-columns: 67px 56px; padding-left: 2px; }
.g-model .tools { grid-template-columns: 34px 84px 52px; padding-left: 4px; }
.g-3d .tools { grid-template-columns: 36px 58px 52px; padding-left: 3px; }
.g-util .tools { grid-template-columns: 28px 19px 21px 28px; padding-left: 6px; }
.g-ui .tools { justify-content: center; padding-left: 0; }
.big {
  grid-row: 1 / 4;
  flex-direction: column;
  justify-content: center;
  line-height: 14px;
}
.big .caret { margin: 3px 0 0; }
.spacer { height: 6px; }
.bi { width: 26px; height: 26px; }

.work { display: flex; flex: 1; gap: 3px; min-height: 0; margin: 3px 3px 0 5px; }
.panel { width: 147px; border: 1px solid #d0d4d7; background: #fff; }
.panel-head { display: flex; align-items: center; height: 14px; padding: 0 0 0 2px; background: #fcfcfc; }
.panel-head span { flex: 1; }
.panel-tabs { display: flex; height: 22px; padding-top: 4px; border-bottom: 1px solid #d9dcdf; background: #fcfcfc; }
.panel-tabs button { height: 18px; padding: 0 2px; border: 1px solid #d0d4d7; border-width: 1px 1px 0 0; }
.panel-bar { display: flex; align-items: center; gap: 4px; height: 18px; padding: 0 4px 0 2px; border-bottom: 1px solid #d9dcdf; background: #fcfcfc; color: #333; }
.panel-bar span { flex: 1; }
.panel-bar .caret { margin-left: 3px; }
.tree { padding: 1px 3px; list-style: none; color: #222; }
.tree li { display: flex; align-items: center; height: 17px; margin-left: 20px; padding-left: 9px; background: repeating-linear-gradient(90deg, #aaa 0 1px, transparent 1px 2px) 0 8px / 8px 1px no-repeat; border-left: 1px dotted #aaa; }
.tree li:last-child { border-image: linear-gradient(#aaa 50%, transparent 50%) 1; }
.tree .root { margin: 0; padding: 0; border: 0; background: none; }
.root svg { width: 28px; height: 13px; }
.tree label { display: flex; align-items: center; }
.tree input { appearance: none; position: relative; width: 10px; height: 10px; margin: 0 6px 0 1px; border: 1px solid #333; background: #fff; }
.tree input:checked::after { content: ""; position: absolute; left: 2px; top: 0; width: 3px; height: 5px; border: solid #111; border-width: 0 2px 2px 0; transform: rotate(40deg); }
.obj { width: 20px; height: 13px; }
.tree b { margin-left: 1px; padding: 0 3px; line-height: 12px; border-bottom: 1px solid #4ce44c; font-size: 11px; }

.viewport { flex: 1; min-width: 0; border: 1px solid #d3d7da; background: #fcfcfc; }
.viewport svg { width: 100%; height: 100%; overflow: visible; }
.wp-name { fill: #333; font: italic 12px "Open Sans", sans-serif; }

.command { display: flex; align-items: center; gap: 2px; height: 29px; padding-left: 6px; }
.grip { width: 2px; height: 20px; border-left: 2px dotted #bbb; }
.command select { width: 275px; height: 20px; border: 1px solid #c7cbcf; }
.command button { justify-content: center; width: 20px; height: 20px; border: 1px solid #bbb; border-radius: 2px; }
.command button svg { width: 18px; height: 18px; }
.command select, .status select {
  background-color: #fff;
  background-image: linear-gradient(45deg, transparent 50%, currentColor 50%), linear-gradient(-45deg, transparent 50%, currentColor 50%);
  background-image: conic-gradient(from -45deg at 50% 100%, #222 90deg, transparent 0);
  background-repeat: no-repeat;
  background-position: right 4px center;
  background-size: 6px 3px;
  background-image: conic-gradient(from -60deg at 50% 100%, #222 120deg, transparent 0);
  background-image: linear-gradient(to bottom left, #222 50%, transparent 50%), linear-gradient(to bottom right, #222 50%, transparent 50%);
  background-position: right 7px center, right 4px center;
  background-size: 3px 3px;
}
.status .filter {
  background-image: linear-gradient(to bottom left, #888 50%, transparent 50%), linear-gradient(to bottom right, #888 50%, transparent 50%);
  background-size: 2px 3px;
  background-position: right 6px center, right 4px center;
}

.status {
  display: flex;
  align-items: center;
  height: 23px;
  padding: 0 4px 3px 11px;
  border-top: 2px solid #999c9f;
  background: #eceef0;
}
.status p { flex: 1; min-width: 0; white-space: nowrap; font-feature-settings: "palt"; }
.warn { margin: 0 5px 0 7px; }
.cell { flex: none; width: 23px; height: 15px; margin-right: 2px; border: 1px solid #d3d7da; background: #fff; color: #333; line-height: 14px; text-align: center; }
.txt { flex: none; margin: 0 4px 0 1px; }
.txt + .txt { margin: 0 8px 0 3px; }
.status select { flex: none; width: 68px; height: 16px; padding: 0 2px; border: 1px solid #d3d7da; }
.sicons { display: flex; gap: 7px; margin: 0 10px 0 5px; }
.resize { align-self: end; width: 8px; height: 8px; }
```
